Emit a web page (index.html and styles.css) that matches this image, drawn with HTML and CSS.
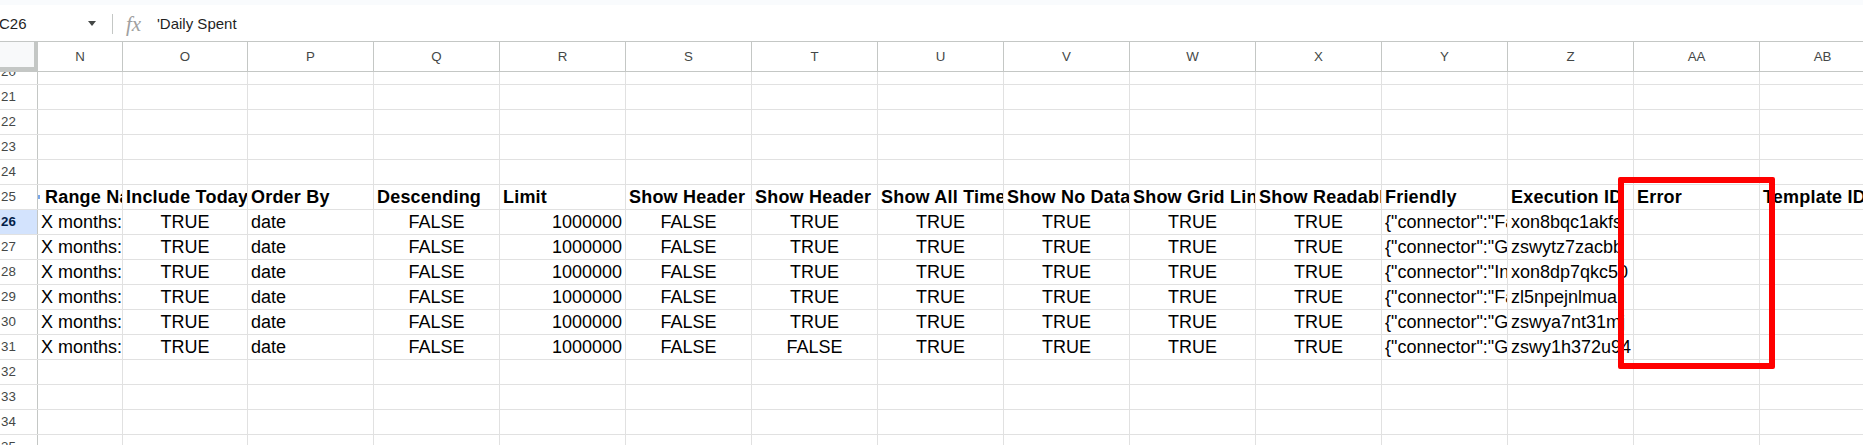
FILE: index.html
```html
<!DOCTYPE html>
<html lang="en">
<head>
<meta charset="utf-8">
<title>Sheet</title>
<link rel="stylesheet" href="styles.css">
</head>
<body>
<div class="topstrip"></div>
<div class="fbar">
  <div class="namebox"><span class="nb-text">C26</span><span class="caret"></span></div>
  <div class="sep"></div>
  <span class="fx">fx</span>
  <span class="formula">'Daily Spent</span>
</div>
<div class="sheet">
  <div class="colhead">
    <div class="corner"></div>
    <div class="ch">N</div><div class="ch">O</div><div class="ch">P</div><div class="ch">Q</div><div class="ch">R</div><div class="ch">S</div><div class="ch">T</div><div class="ch">U</div><div class="ch">V</div><div class="ch">W</div><div class="ch">X</div><div class="ch">Y</div><div class="ch">Z</div><div class="ch">AA</div><div class="ch">AB</div>
  </div>
  <div class="body">
    <div class="rows">
      <div class="row"><div class="rh">20</div><div class="c"></div><div class="c"></div><div class="c"></div><div class="c"></div><div class="c"></div><div class="c"></div><div class="c"></div><div class="c"></div><div class="c"></div><div class="c"></div><div class="c"></div><div class="c"></div><div class="c"></div><div class="c"></div><div class="c"></div></div>
      <div class="row"><div class="rh">21</div><div class="c"></div><div class="c"></div><div class="c"></div><div class="c"></div><div class="c"></div><div class="c"></div><div class="c"></div><div class="c"></div><div class="c"></div><div class="c"></div><div class="c"></div><div class="c"></div><div class="c"></div><div class="c"></div><div class="c"></div></div>
      <div class="row"><div class="rh">22</div><div class="c"></div><div class="c"></div><div class="c"></div><div class="c"></div><div class="c"></div><div class="c"></div><div class="c"></div><div class="c"></div><div class="c"></div><div class="c"></div><div class="c"></div><div class="c"></div><div class="c"></div><div class="c"></div><div class="c"></div></div>
      <div class="row"><div class="rh">23</div><div class="c"></div><div class="c"></div><div class="c"></div><div class="c"></div><div class="c"></div><div class="c"></div><div class="c"></div><div class="c"></div><div class="c"></div><div class="c"></div><div class="c"></div><div class="c"></div><div class="c"></div><div class="c"></div><div class="c"></div></div>
      <div class="row"><div class="rh">24</div><div class="c"></div><div class="c"></div><div class="c"></div><div class="c"></div><div class="c"></div><div class="c"></div><div class="c"></div><div class="c"></div><div class="c"></div><div class="c"></div><div class="c"></div><div class="c"></div><div class="c"></div><div class="c"></div><div class="c"></div></div>
      <div class="row"><div class="rh">25</div><div class="c b first"><span class="mark"></span>Range Name</div><div class="c b">Include Today</div><div class="c b">Order By</div><div class="c b">Descending</div><div class="c b">Limit</div><div class="c b">Show Header</div><div class="c b">Show Header</div><div class="c b">Show All Time</div><div class="c b">Show No Data</div><div class="c b">Show Grid Lines</div><div class="c b">Show Readable</div><div class="c b">Friendly</div><div class="c b">Execution ID</div><div class="c b">Error</div><div class="c b">Template ID</div></div>
      <div class="row"><div class="rh sel">26</div><div class="c">X months:</div><div class="c ctr">TRUE</div><div class="c">date</div><div class="c ctr">FALSE</div><div class="c r">1000000</div><div class="c ctr">FALSE</div><div class="c ctr">TRUE</div><div class="c ctr">TRUE</div><div class="c ctr">TRUE</div><div class="c ctr">TRUE</div><div class="c ctr">TRUE</div><div class="c">{"connector":"Facebook Ads"}</div><div class="c">xon8bqc1akfs</div><div class="c"></div><div class="c"></div></div>
      <div class="row"><div class="rh">27</div><div class="c">X months:</div><div class="c ctr">TRUE</div><div class="c">date</div><div class="c ctr">FALSE</div><div class="c r">1000000</div><div class="c ctr">FALSE</div><div class="c ctr">TRUE</div><div class="c ctr">TRUE</div><div class="c ctr">TRUE</div><div class="c ctr">TRUE</div><div class="c ctr">TRUE</div><div class="c">{"connector":"Google Ads"}</div><div class="c">zswytz7zacbb</div><div class="c"></div><div class="c"></div></div>
      <div class="row"><div class="rh">28</div><div class="c">X months:</div><div class="c ctr">TRUE</div><div class="c">date</div><div class="c ctr">FALSE</div><div class="c r">1000000</div><div class="c ctr">FALSE</div><div class="c ctr">TRUE</div><div class="c ctr">TRUE</div><div class="c ctr">TRUE</div><div class="c ctr">TRUE</div><div class="c ctr">TRUE</div><div class="c">{"connector":"Instagram"}</div><div class="c">xon8dp7qkc50</div><div class="c"></div><div class="c"></div></div>
      <div class="row"><div class="rh">29</div><div class="c">X months:</div><div class="c ctr">TRUE</div><div class="c">date</div><div class="c ctr">FALSE</div><div class="c r">1000000</div><div class="c ctr">FALSE</div><div class="c ctr">TRUE</div><div class="c ctr">TRUE</div><div class="c ctr">TRUE</div><div class="c ctr">TRUE</div><div class="c ctr">TRUE</div><div class="c">{"connector":"Facebook Ads"}</div><div class="c">zl5npejnlmua</div><div class="c"></div><div class="c"></div></div>
      <div class="row"><div class="rh">30</div><div class="c">X months:</div><div class="c ctr">TRUE</div><div class="c">date</div><div class="c ctr">FALSE</div><div class="c r">1000000</div><div class="c ctr">FALSE</div><div class="c ctr">TRUE</div><div class="c ctr">TRUE</div><div class="c ctr">TRUE</div><div class="c ctr">TRUE</div><div class="c ctr">TRUE</div><div class="c">{"connector":"Google Ads"}</div><div class="c">zswya7nt31mj</div><div class="c"></div><div class="c"></div></div>
      <div class="row"><div class="rh">31</div><div class="c">X months:</div><div class="c ctr">TRUE</div><div class="c">date</div><div class="c ctr">FALSE</div><div class="c r">1000000</div><div class="c ctr">FALSE</div><div class="c ctr">FALSE</div><div class="c ctr">TRUE</div><div class="c ctr">TRUE</div><div class="c ctr">TRUE</div><div class="c ctr">TRUE</div><div class="c">{"connector":"Google Analytics"}</div><div class="c">zswy1h372u94</div><div class="c"></div><div class="c"></div></div>
      <div class="row"><div class="rh">32</div><div class="c"></div><div class="c"></div><div class="c"></div><div class="c"></div><div class="c"></div><div class="c"></div><div class="c"></div><div class="c"></div><div class="c"></div><div class="c"></div><div class="c"></div><div class="c"></div><div class="c"></div><div class="c"></div><div class="c"></div></div>
      <div class="row"><div class="rh">33</div><div class="c"></div><div class="c"></div><div class="c"></div><div class="c"></div><div class="c"></div><div class="c"></div><div class="c"></div><div class="c"></div><div class="c"></div><div class="c"></div><div class="c"></div><div class="c"></div><div class="c"></div><div class="c"></div><div class="c"></div></div>
      <div class="row"><div class="rh">34</div><div class="c"></div><div class="c"></div><div class="c"></div><div class="c"></div><div class="c"></div><div class="c"></div><div class="c"></div><div class="c"></div><div class="c"></div><div class="c"></div><div class="c"></div><div class="c"></div><div class="c"></div><div class="c"></div><div class="c"></div></div>
      <div class="row"><div class="rh">35</div><div class="c"></div><div class="c"></div><div class="c"></div><div class="c"></div><div class="c"></div><div class="c"></div><div class="c"></div><div class="c"></div><div class="c"></div><div class="c"></div><div class="c"></div><div class="c"></div><div class="c"></div><div class="c"></div><div class="c"></div></div>
    </div>
  </div>
  <div class="highlight"></div>
</div>
</body>
</html>
```

FILE: styles.css
```css
* { box-sizing: border-box; }

html, body {
  margin: 0;
  padding: 0;
}

body {
  width: 1863px;
  height: 445px;
  overflow: hidden;
  background: #ffffff;
  font-family: "Liberation Sans", Arial, sans-serif;
  color: #000000;
}

.topstrip {
  height: 5px;
  background: #f9fbfd;
}

.fbar {
  height: 36px;
  display: flex;
  align-items: center;
  font-size: 15px;
  color: #1f1f1f;
  padding-top: 1px;
}

.namebox {
  width: 113px;
  margin-left: -1px;
  display: flex;
  align-items: center;
}

.nb-text {
  flex: 1;
}

.caret {
  width: 0;
  height: 0;
  border-left: 4.5px solid transparent;
  border-right: 4.5px solid transparent;
  border-top: 5px solid #444746;
  margin-right: 16px;
}

.sep {
  width: 1px;
  height: 20px;
  background: #c4c7c5;
}

.fx {
  width: 19px;
  margin-left: 13px;
  font-family: "Liberation Serif", "DejaVu Serif", serif;
  font-style: italic;
  font-size: 21px;
  color: #a0a0a0;
  line-height: 20px;
}

.formula {
  margin-left: 12px;
}

.sheet {
  position: relative;
}

.colhead,
.row {
  display: grid;
  grid-template-columns: 38px 85px 125px repeat(13, 126px);
}

.colhead {
  height: 31px;
  border-top: 1px solid #c4c7c5;
  border-bottom: 1px solid #c4c7c5;
}

.corner {
  background: #f8f9fa;
  border-right: 4px solid #c4c7c5;
  border-bottom: 4px solid #c4c7c5;
}

.ch {
  border-right: 1px solid #c4c7c5;
  font-size: 13.3px;
  line-height: 29px;
  text-align: center;
  color: #444746;
}

.body {
  height: 373px;
  overflow: hidden;
}

.rows {
  margin-top: -12px;
}

.row {
  height: 25px;
  border-bottom: 1px solid #e1e1e1;
}

.rh {
  border-right: 1px solid #c4c7c5;
  font-size: 13.3px;
  line-height: 24px;
  padding-left: 1px;
  color: #444746;
  overflow: hidden;
  white-space: nowrap;
}

.rh.sel {
  background: #d3e3fd;
  font-weight: bold;
  color: #041e49;
}

.c {
  border-right: 1px solid #e1e1e1;
  font-size: 18px;
  line-height: 23px;
  padding: 1px 3px 0 3px;
  overflow: hidden;
  white-space: nowrap;
  color: #000000;
}

.c.b {
  font-weight: bold;
  letter-spacing: 0.2px;
}
.c.first { padding-left: 0; }
.c.ctr { text-align: center; }
.c.r { text-align: right; }

.mark {
  display: inline-block;
  width: 2px;
  height: 4px;
  margin-right: 5px;
  vertical-align: 4px;
  background: #7aa7e8;
}

.highlight {
  position: absolute;
  left: 1618px;
  top: 136px;
  width: 157px;
  height: 192px;
  border: 6px solid #ff0000;
  border-radius: 2px;
}
```
